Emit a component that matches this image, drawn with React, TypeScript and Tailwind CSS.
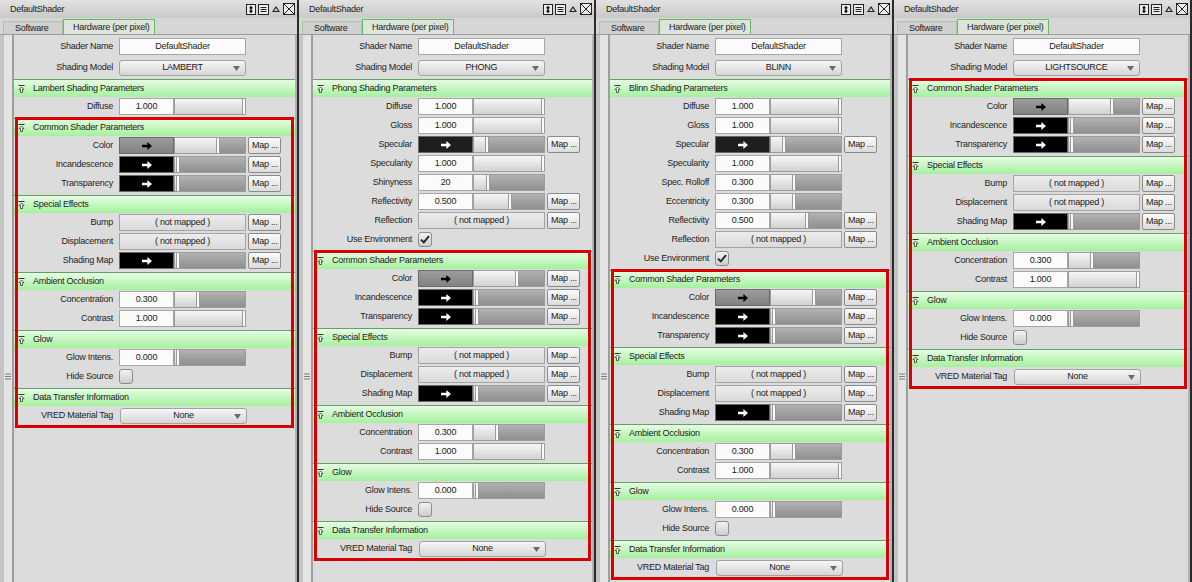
import React from "react";

type Row =
  | { k: "float"; label: string; value: string; t: number; map?: boolean }
  | { k: "color"; label: string; swatch: "gray" | "black" | "dark"; t: number }
  | { k: "unmapped"; label: string }
  | { k: "check"; label: string; checked: boolean }
  | { k: "select"; label: string; value: string };

type Section = { title: string; rows: Row[] };

function Arrow({ color }: { color: string }) {
  return (
    <svg width="10" height="8" viewBox="0 0 10 8">
      <path d="M0 2.7h5.4V0l4.6 4-4.6 4V5.3H0z" fill={color} />
    </svg>
  );
}

function Slider({ t }: { t: number }) {
  const pos = 1 + t * 66;
  return (
    <div className="relative h-[17px] w-[72px] overflow-hidden border border-[#9c9c9c] bg-gradient-to-b from-[#b2b2b2] to-[#8f8f8f]">
      <div
        className="absolute bottom-0 left-0 top-0 bg-gradient-to-b from-[#f6f6f6] to-[#d2d2d2]"
        style={{ width: pos }}
      />
      <div
        className="absolute bottom-0 top-0 w-[4px] border-x border-[#9a9a9a] bg-[#fafafa]"
        style={{ left: pos }}
      />
    </div>
  );
}

function MapButton() {
  return (
    <div className="ml-[2px] flex h-[17px] w-[33px] items-center rounded-[2px] border border-[#8a8a8a] bg-gradient-to-b from-[#fbfbfb] to-[#dcdcdc] pl-[3px] text-[#1a1a1a]">
      Map ...
    </div>
  );
}

function Dropdown({ value }: { value: string }) {
  return (
    <div className="relative flex h-[16px] w-[127px] items-center justify-center rounded-[3px] border border-[#a2a2a2] bg-gradient-to-b from-[#f6f6f6] to-[#d6d6d6] text-[#1a1a1a]">
      <span>{value}</span>
      <svg className="absolute right-[5px] top-[5px]" width="7" height="5" viewBox="0 0 7 5">
        <path d="M0 0h7L3.5 5z" fill="#6a6a6a" />
      </svg>
    </div>
  );
}

function Control({ row }: { row: Row }) {
  if (row.k === "float") {
    return (
      <div className="flex items-center">
        <div className="flex h-[17px] w-[55px] items-center justify-center border border-[#a6a6a6] bg-[#fbfbfb] text-[#1a1a1a]">
          {row.value}
        </div>
        <Slider t={row.t} />
        {row.map && <MapButton />}
      </div>
    );
  }
  if (row.k === "color") {
    const sw =
      row.swatch === "gray"
        ? "bg-gradient-to-b from-[#9c9c9c] to-[#828282]"
        : row.swatch === "dark"
        ? "bg-[#1e1e1e]"
        : "bg-[#000000]";
    return (
      <div className="flex items-center">
        <div className={`flex h-[17px] w-[55px] items-center justify-center border border-[#6a6a6a] ${sw}`}>
          <Arrow color={row.swatch === "gray" ? "#000000" : "#ffffff"} />
        </div>
        <Slider t={row.t} />
        <MapButton />
      </div>
    );
  }
  if (row.k === "unmapped") {
    return (
      <div className="flex items-center">
        <div className="flex h-[17px] w-[127px] items-center justify-center border border-[#a4a4a4] bg-gradient-to-b from-[#ececec] to-[#dadada] text-[#1a1a1a]">
          ( not mapped )
        </div>
        <MapButton />
      </div>
    );
  }
  if (row.k === "check") {
    return (
      <div className="flex h-[15px] w-[14px] items-center justify-center rounded-[3px] border border-[#8c8c8c] bg-gradient-to-b from-[#f2f2f2] to-[#cdcdcd]">
        {row.checked && (
          <svg width="10" height="9" viewBox="0 0 10 9">
            <path d="M1 4.6 L3.8 7.4 L9 1.2" fill="none" stroke="#14233a" strokeWidth="1.9" />
          </svg>
        )}
      </div>
    );
  }
  return (
    <div className="ml-[1px]">
      <Dropdown value={row.value} />
    </div>
  );
}

function RowView({ row }: { row: Row }) {
  return (
    <div className="flex h-[19px] items-center">
      <div className="w-[99px] text-right text-[#1c1c1c]">{row.label}</div>
      <div className="ml-[6px]">
        <Control row={row} />
      </div>
    </div>
  );
}

function PinIcon() {
  return (
    <svg width="7" height="8" viewBox="0 0 7 8">
      <path d="M0.5 0.5h6" stroke="#333" strokeWidth="1" />
      <path d="M3.5 2 L6 4.6 H4.5 V7.5 H2.5 V4.6 H1 Z" fill="#f4fff4" stroke="#333" strokeWidth="0.8" />
    </svg>
  );
}

function SectionView({ s }: { s: Section }) {
  return (
    <div className="pt-[2px]">
      <div className="flex h-[18px] items-center border-t border-[#62a262] bg-gradient-to-b from-[#e6fce3] to-[#a4f09d] pl-[4px] text-[#1a1a1a]">
        <PinIcon />
        <span className="ml-[8px]">{s.title}</span>
      </div>
      {s.rows.map((r, i) => (
        <RowView key={i} row={r} />
      ))}
    </div>
  );
}

function TitleIcons() {
  return (
    <div className="mr-[2px] flex items-center">
      <svg width="10" height="11" viewBox="0 0 10 11">
        <rect x="0.5" y="0.5" width="9" height="10" fill="#ececec" stroke="#222" />
        <path d="M5 1.8 L7.2 4.3 H5.8 V6.7 H7.2 L5 9.2 L2.8 6.7 H4.2 V4.3 H2.8 Z" fill="#111" />
      </svg>
      <svg className="ml-[2px]" width="11" height="11" viewBox="0 0 11 11">
        <rect x="0.5" y="0.5" width="10" height="10" fill="#ececec" stroke="#222" />
        <path d="M2.5 3.5h6M2.5 5.5h6M2.5 7.5h6" stroke="#222" />
      </svg>
      <svg className="ml-[3px]" width="8" height="8" viewBox="0 0 8 8">
        <path d="M1 6.5 L4 2 L7 6.5 Z" fill="none" stroke="#222" strokeWidth="1.2" />
      </svg>
      <svg className="ml-[3px]" width="12" height="12" viewBox="0 0 12 12">
        <rect x="0.5" y="0.5" width="11" height="11" fill="#ececec" stroke="#222" />
        <path d="M1 1 L11 11 M11 1 L1 11" stroke="#222" />
      </svg>
    </div>
  );
}

function Grip() {
  return (
    <svg width="6" height="7" viewBox="0 0 6 7">
      <path d="M0 1h6M0 3.5h6M0 6h6" stroke="#7c7c7c" />
    </svg>
  );
}

const common: Section[] = [
  {
    title: "Common Shader Parameters",
    rows: [
      { k: "color", label: "Color", swatch: "gray", t: 0.6 },
      { k: "color", label: "Incandescence", swatch: "black", t: 0 },
      { k: "color", label: "Transparency", swatch: "black", t: 0 },
    ],
  },
  {
    title: "Special Effects",
    rows: [
      { k: "unmapped", label: "Bump" },
      { k: "unmapped", label: "Displacement" },
      { k: "color", label: "Shading Map", swatch: "black", t: 0 },
    ],
  },
  {
    title: "Ambient Occlusion",
    rows: [
      { k: "float", label: "Concentration", value: "0.300", t: 0.3 },
      { k: "float", label: "Contrast", value: "1.000", t: 1 },
    ],
  },
  {
    title: "Glow",
    rows: [
      { k: "float", label: "Glow Intens.", value: "0.000", t: 0 },
      { k: "check", label: "Hide Source", checked: false },
    ],
  },
  {
    title: "Data Transfer Information",
    rows: [{ k: "select", label: "VRED Material Tag", value: "None" }],
  },
];

function Panel({
  width,
  model,
  lead,
}: {
  width: string;
  model: string;
  lead: Section[];
}) {
  return (
    <div className={`flex h-[582px] flex-col bg-[#2a2a2a] pr-[2px] ${width}`}>
      <div className="flex flex-1 flex-col bg-[#d4d4d4]">
        <div className="flex h-[18px] items-center justify-between bg-gradient-to-b from-[#e2e2e2] to-[#c9c9c9] pl-[10px] text-[#1c1c1c]">
          <span>DefaultShader</span>
          <TitleIcons />
        </div>
        <div className="flex h-[16px] items-end bg-[#d6d6d6] pl-[3px]">
          <div className="flex h-[13px] w-[60px] items-center border-x border-t border-[#a4c8a4] bg-[#d0d0d0] pl-[11px] text-[#1c1c1c]">
            Software
          </div>
          <div className="flex h-[15px] w-[92px] items-center border-x border-t border-[#62bc62] bg-[#dde4da] pl-[9px] text-[#1c1c1c]">
            Hardware (per pixel)
          </div>
        </div>
        <div className="flex flex-1 border-t border-[#9c9c9c]">
          <div className="flex w-[14px]">
            <div className="w-[4px] bg-[#c4c4c4]" />
            <div className="flex w-[8px] flex-col items-center bg-[#e4e4e4] pt-[338px]">
              <Grip />
            </div>
            <div className="w-[2px] bg-[#9e9e9e]" />
          </div>
          <div className="flex-1 border-r-2 border-[#b2b2b2] bg-[#dcdcdc]">
            <div className="pt-[2px]">
              <div className="flex h-[19px] items-center">
                <div className="w-[99px] text-right text-[#1c1c1c]">Shader Name</div>
                <div className="ml-[6px] flex h-[17px] w-[127px] items-center justify-center border border-[#a6a6a6] bg-[#fbfbfb] text-[#1a1a1a]">
                  DefaultShader
                </div>
              </div>
              <div className="mt-[2px] flex h-[19px] items-center">
                <div className="w-[99px] text-right text-[#1c1c1c]">Shading Model</div>
                <div className="ml-[6px]">
                  <Dropdown value={model} />
                </div>
              </div>
            </div>
            {lead.map((s, i) => (
              <SectionView key={i} s={s} />
            ))}
            <div className="relative">
              {common.map((s, i) => (
                <SectionView key={i} s={s} />
              ))}
              <div className="pointer-events-none absolute bottom-[-3px] left-[1px] right-[1px] top-[1px] border-[3px] border-[#d80000]" />
            </div>
          </div>
        </div>
      </div>
    </div>
  );
}

const phong: Section[] = [
  {
    title: "Phong Shading Parameters",
    rows: [
      { k: "float", label: "Diffuse", value: "1.000", t: 1 },
      { k: "float", label: "Gloss", value: "1.000", t: 1 },
      { k: "color", label: "Specular", swatch: "dark", t: 0.15 },
      { k: "float", label: "Specularity", value: "1.000", t: 1 },
      { k: "float", label: "Shinyness", value: "20", t: 0.16 },
      { k: "float", label: "Reflectivity", value: "0.500", t: 0.5, map: true },
      { k: "unmapped", label: "Reflection" },
      { k: "check", label: "Use Environment", checked: true },
    ],
  },
];

const blinn: Section[] = [
  {
    title: "Blinn Shading Parameters",
    rows: [
      { k: "float", label: "Diffuse", value: "1.000", t: 1 },
      { k: "float", label: "Gloss", value: "1.000", t: 1 },
      { k: "color", label: "Specular", swatch: "dark", t: 0.15 },
      { k: "float", label: "Specularity", value: "1.000", t: 1 },
      { k: "float", label: "Spec. Rolloff", value: "0.300", t: 0.3 },
      { k: "float", label: "Eccentricity", value: "0.300", t: 0.3 },
      { k: "float", label: "Reflectivity", value: "0.500", t: 0.5, map: true },
      { k: "unmapped", label: "Reflection" },
      { k: "check", label: "Use Environment", checked: true },
    ],
  },
];

const lambert: Section[] = [
  {
    title: "Lambert Shading Parameters",
    rows: [{ k: "float", label: "Diffuse", value: "1.000", t: 1 }],
  },
];

export default function App() {
  return (
    <div className="flex h-[582px] w-[1192px] overflow-hidden bg-[#2a2a2a] font-['Liberation_Sans',Arial,sans-serif] text-[9px] leading-none tracking-[-0.25px]">
      <Panel width="w-[299px]" model="LAMBERT" lead={lambert} />
      <Panel width="w-[297px]" model="PHONG" lead={phong} />
      <Panel width="w-[298px]" model="BLINN" lead={blinn} />
      <Panel width="w-[298px]" model="LIGHTSOURCE" lead={[]} />
    </div>
  );
}
